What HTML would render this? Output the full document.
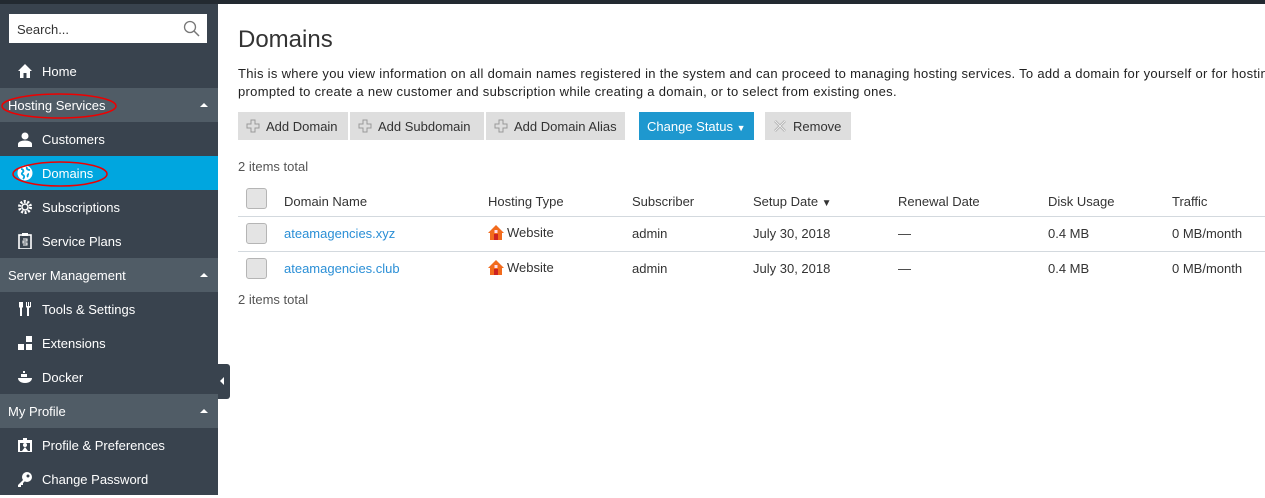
<!DOCTYPE html>
<html><head><meta charset="utf-8"><style>
*{margin:0;padding:0;box-sizing:border-box}
body{width:1265px;height:495px;overflow:hidden;background:#fff;font-family:"Liberation Sans",sans-serif;font-size:13px;color:#222;position:relative}
#top{position:absolute;left:0;top:0;width:1265px;height:4px;background:#232a31}
#side{position:absolute;left:0;top:4px;width:218px;height:491px;background:#39434e;color:#fff}
.srch{position:absolute;left:9px;top:10px;width:198px;height:29px;background:#fff;color:#333;padding:8px 8px;font-size:13px}
.it{position:absolute;left:0;width:218px;height:34px;line-height:36px;padding-left:42px;font-size:13px;color:#fff}
.hd{position:absolute;left:0;width:218px;height:34px;line-height:36px;padding-left:8px;background:#505c66;font-size:13px}
.hd:after{content:"";position:absolute;right:10px;top:15px;border:4px solid transparent;border-bottom:4px solid #fff;border-top:0}
.act{background:#00a6df}
.ic{position:absolute;left:17px;top:9px;width:16px;height:16px}
h1{position:absolute;left:238px;top:26px;font-size:24px;font-weight:normal;color:#333;white-space:nowrap}
.desc{position:absolute;left:238px;top:65px;font-size:13px;line-height:18px;color:#222;white-space:nowrap;letter-spacing:0.3px}
.btn{position:absolute;top:112px;height:28px;line-height:29px;background:#dedede;color:#333;padding-left:28px;font-size:13px}
.btn .pl{position:absolute;left:8px;top:7px;width:14px;height:14px}
.blue{background:#1e98cf;color:#fff;padding:0 8px}
.t{position:absolute;font-size:13px;color:#333;white-space:nowrap}
.cb{position:absolute;left:246px;width:21px;height:21px;border:1px solid #b5b5b5;border-radius:3px;background:#e4e4e4}
.ln{position:absolute;left:238px;width:1027px;height:1px;background:#d3d9de}
a{color:#2b8fd6;text-decoration:none}
.hs{display:inline-block;vertical-align:-3px;margin-right:3px}
</style></head><body>
<div id="top"></div>
<div id="side">
<div class="srch">Search...<svg style="position:absolute;right:7px;top:6px" width="17" height="17" viewBox="0 0 17 17"><circle cx="7" cy="7" r="5.5" fill="none" stroke="#777" stroke-width="1.3"/><path d="M11 11l5 5" stroke="#777" stroke-width="1.5"/></svg></div>
<div class="it" style="top:50px"><svg class="ic" viewBox="0 0 16 16"><path d="M8 1L1 8h2v7h3.5v-5h3v5H13V8h2z" fill="#fff"/></svg>Home</div>
<div class="hd" style="top:84px">Hosting Services</div>
<div class="it" style="top:118px"><svg class="ic" viewBox="0 0 16 16"><circle cx="8" cy="5" r="3.5" fill="#fff"/><path d="M1 16v-3c0-2 3-3.5 7-3.5s7 1.5 7 3.5v3z" fill="#fff"/></svg>Customers</div>
<div class="it act" style="top:152px"><svg class="ic" viewBox="0 0 16 16"><circle cx="8" cy="8" r="7.5" fill="#fff"/><path d="M4 4c2 0 3 2 2 3s-2 2 0 3 1 3 0 4M10 2c-1 2 1 3 3 3M12 9c-1 0-2 2-1 3" stroke="#00a6df" stroke-width="1.8" fill="none"/></svg>Domains</div>
<div class="it" style="top:186px"><svg class="ic" viewBox="0 0 16 16"><circle cx="8" cy="8" r="5.5" fill="none" stroke="#fff" stroke-width="3" stroke-dasharray="2 1.5"/><circle cx="8" cy="8" r="3" fill="none" stroke="#fff" stroke-width="1.5"/></svg>Subscriptions</div>
<div class="it" style="top:220px"><svg class="ic" viewBox="0 0 16 16"><rect x="2" y="2" width="12" height="14" fill="none" stroke="#fff" stroke-width="1.6"/><rect x="5" y="0" width="6" height="3" fill="#fff"/><path d="M6 6h4v2H6v2h4v2H6" stroke="#fff" fill="none"/></svg>Service Plans</div>
<div class="hd" style="top:254px">Server Management</div>
<div class="it" style="top:288px"><svg class="ic" viewBox="0 0 16 16"><path d="M2 1h4v5l-1 1v8H3V7L2 6zM10 1v4h1V1h1v4h1V1h1v5l-2 1v8h-2V7L9 6V1z" fill="#fff"/></svg>Tools &amp; Settings</div>
<div class="it" style="top:322px"><svg class="ic" viewBox="0 0 16 16"><rect x="1" y="9" width="6" height="6" fill="#fff"/><rect x="9" y="9" width="6" height="6" fill="#fff"/><rect x="9" y="1" width="6" height="6" fill="#fff"/></svg>Extensions</div>
<div class="it" style="top:356px"><svg class="ic" viewBox="0 0 16 16"><path d="M1 9h14c0 3-3 5-7 5S1 12 1 9z" fill="#fff"/><rect x="4" y="5" width="6" height="3" fill="#fff"/><rect x="6" y="2" width="2" height="2" fill="#fff"/></svg>Docker</div>
<div class="hd" style="top:390px">My Profile</div>
<div class="it" style="top:424px"><svg class="ic" viewBox="0 0 16 16"><rect x="1" y="3" width="14" height="12" fill="#fff"/><rect x="3" y="6" width="10" height="8" fill="#39434e"/><circle cx="8" cy="8" r="2" fill="#fff"/><path d="M5 14l3-4 3 4z" fill="#fff"/><rect x="6" y="1" width="4" height="3" fill="#fff"/></svg>Profile &amp; Preferences</div>
<div class="it" style="top:458px"><svg class="ic" viewBox="0 0 16 16"><circle cx="10" cy="6" r="5" fill="#fff"/><circle cx="11" cy="5" r="1.5" fill="#39434e"/><path d="M7 8L1 14v2h3v-2h2v-2l3-3z" fill="#fff"/></svg>Change Password</div>
</div>
<div style="position:absolute;left:218px;top:364px;width:12px;height:35px;background:#39434e;border-radius:0 3px 3px 0"><div style="position:absolute;left:2px;top:13px;border:4px solid transparent;border-right:4px solid #fff;border-left:0"></div></div>
<svg style="position:absolute;left:0;top:0" width="240" height="200"><ellipse cx="59" cy="106" rx="57" ry="12" fill="none" stroke="#e00" stroke-width="1.5"/><ellipse cx="60" cy="174" rx="47" ry="12" fill="none" stroke="#e00" stroke-width="1.5"/></svg>
<h1>Domains</h1>
<div class="desc">This is where you view information on all domain names registered in the system and can proceed to managing hosting services. To add a domain for yourself or for hosting<br>prompted to create a new customer and subscription while creating a domain, or to select from existing ones.</div>
<div class="btn" style="left:238px;width:110px"><svg class="pl" viewBox="0 0 14 14"><path d="M5 1h4v4h4v4H9v4H5V9H1V5h4z" fill="none" stroke="#999"/></svg>Add Domain</div>
<div class="btn" style="left:350px;width:134px"><svg class="pl" viewBox="0 0 14 14"><path d="M5 1h4v4h4v4H9v4H5V9H1V5h4z" fill="none" stroke="#999"/></svg>Add Subdomain</div>
<div class="btn" style="left:486px;width:139px"><svg class="pl" viewBox="0 0 14 14"><path d="M5 1h4v4h4v4H9v4H5V9H1V5h4z" fill="none" stroke="#999"/></svg>Add Domain Alias</div>
<div class="btn blue" style="left:639px;width:115px">Change Status <span style="font-size:9px">▼</span></div>
<div class="btn" style="left:765px;width:86px"><svg class="pl" viewBox="0 0 14 14"><path d="M2 2l10 10M12 2L2 12" stroke="#aaa" stroke-width="2.5"/><path d="M2 2l10 10M12 2L2 12" stroke="#eee" stroke-width="1"/></svg>Remove</div>
<div class="t" style="left:238px;top:159px;color:#555">2 items total</div>
<div class="cb" style="top:188px"></div>
<div class="t" style="left:284px;top:194px">Domain Name</div>
<div class="t" style="left:488px;top:194px">Hosting Type</div>
<div class="t" style="left:632px;top:194px">Subscriber</div>
<div class="t" style="left:753px;top:194px">Setup Date <span style="font-size:10px">▼</span></div>
<div class="t" style="left:898px;top:194px">Renewal Date</div>
<div class="t" style="left:1048px;top:194px">Disk Usage</div>
<div class="t" style="left:1172px;top:194px">Traffic</div>
<div class="ln" style="top:216px"></div>
<div class="cb" style="top:223px"></div>
<div class="t" style="left:284px;top:226px"><a>ateamagencies.xyz</a></div>
<div class="t" style="left:488px;top:224px"><svg class="hs" width="16" height="16" viewBox="0 0 16 16"><path d="M8 1L0 9h2v7h12V9h2z" fill="#f26b1d"/><rect x="6" y="10" width="4" height="6" fill="#c22"/><rect x="6.5" y="6" width="3" height="3" fill="#fde"/></svg>Website</div>
<div class="t" style="left:632px;top:226px">admin</div>
<div class="t" style="left:753px;top:226px">July 30, 2018</div>
<div class="t" style="left:898px;top:226px">—</div>
<div class="t" style="left:1048px;top:226px">0.4 MB</div>
<div class="t" style="left:1172px;top:226px">0 MB/month</div>
<div class="ln" style="top:251px"></div>
<div class="cb" style="top:258px"></div>
<div class="t" style="left:284px;top:261px"><a>ateamagencies.club</a></div>
<div class="t" style="left:488px;top:259px"><svg class="hs" width="16" height="16" viewBox="0 0 16 16"><path d="M8 1L0 9h2v7h12V9h2z" fill="#f26b1d"/><rect x="6" y="10" width="4" height="6" fill="#c22"/><rect x="6.5" y="6" width="3" height="3" fill="#fde"/></svg>Website</div>
<div class="t" style="left:632px;top:261px">admin</div>
<div class="t" style="left:753px;top:261px">July 30, 2018</div>
<div class="t" style="left:898px;top:261px">—</div>
<div class="t" style="left:1048px;top:261px">0.4 MB</div>
<div class="t" style="left:1172px;top:261px">0 MB/month</div>
<div class="t" style="left:238px;top:292px;color:#555">2 items total</div>
</body></html>
